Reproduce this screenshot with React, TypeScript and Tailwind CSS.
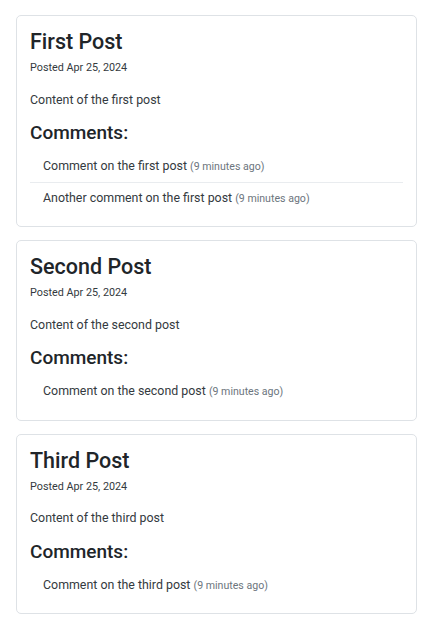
const POSTS = [
  {
    title: "First Post",
    date: "Apr 25, 2024",
    body: "Content of the first post",
    comments: ["Comment on the first post", "Another comment on the first post"],
  },
  {
    title: "Second Post",
    date: "Apr 25, 2024",
    body: "Content of the second post",
    comments: ["Comment on the second post"],
  },
  {
    title: "Third Post",
    date: "Apr 25, 2024",
    body: "Content of the third post",
    comments: ["Comment on the third post"],
  },
];

export default function App() {
  return (
    <div
      className="min-h-screen bg-white px-4 pt-[15px] text-[#212529]"
      style={{ fontFamily: 'Roboto, "Open Sans", sans-serif' }}
    >
      {POSTS.map((post) => (
        <div
          key={post.title}
          className="mb-[13px] rounded-[5px] border border-[#dee2e6] p-[13px]"
        >
          <h2 className="mb-[5px] text-[21.5px] leading-[26px] font-medium">
            {post.title}
          </h2>
          <p className="mb-[13px] text-[10.8px] leading-[16.5px] text-[#343a40]">Posted {post.date}</p>
          <p className="mb-[12px] text-[12.4px] leading-[19.5px] text-[#343a40]">{post.body}</p>
          <h4 className="mb-[6px] text-[19px] leading-[24px] font-medium">
            Comments:
          </h4>
          <ul>
            {post.comments.map((c) => (
              <li
                key={c}
                className="border-b border-[#e9ecef] px-[13px] py-[5px] text-[12.4px] leading-[19.5px] text-[#343a40] last:border-b-0"
              >
                {c}{" "}
                <small className="text-[10.6px] text-[#6c757d]">(9 minutes ago)</small>
              </li>
            ))}
          </ul>
        </div>
      ))}
    </div>
  );
}
